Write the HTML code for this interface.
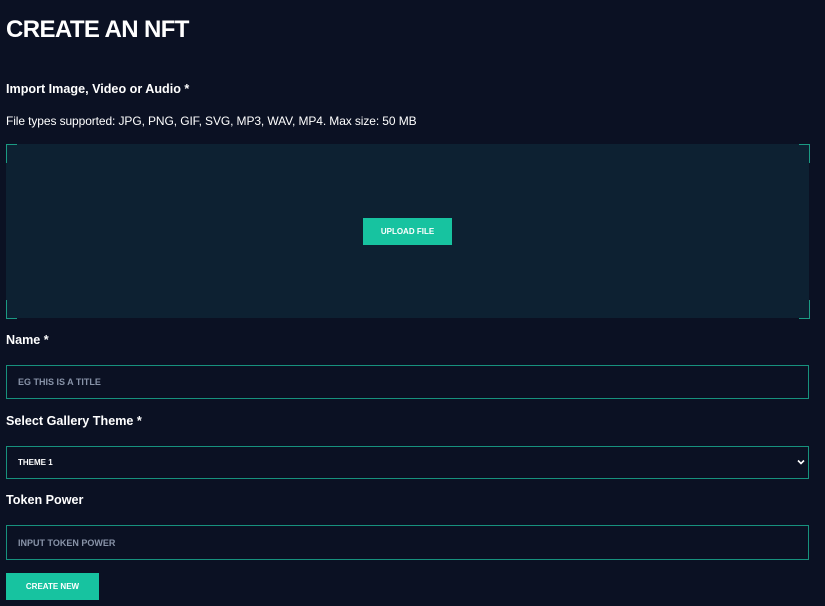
<!DOCTYPE html>
<html><head><style>
body{margin:0;background:#0b1123;font-family:"Liberation Sans",sans-serif;color:#fff;width:825px;height:606px;overflow:hidden;position:relative}
.a{position:absolute}
h1{position:absolute;left:6px;top:16px;margin:0;font-size:24px;font-weight:bold;letter-spacing:-0.6px}
.lbl{position:absolute;left:6px;font-size:12.6px;font-weight:bold}
.box{position:absolute;left:6px;width:801px;border:1px solid #17917d;background:#0b1123}
.ph{position:absolute;left:11px;font-size:9px;color:#8893a8;font-weight:bold}
.btn{position:absolute;background:#17c3a0;color:#fff;font-size:8px;font-weight:bold;text-align:center}
.c{position:absolute;width:10px;height:18px;border-color:#1b9a83;border-style:solid;border-width:0}
</style></head><body>
<h1>CREATE AN NFT</h1>
<div class="lbl" style="top:82px">Import Image, Video or Audio *</div>
<div class="a" style="left:6px;top:114px;font-size:12px;letter-spacing:-0.1px">File types supported: JPG, PNG, GIF, SVG, MP3, WAV, MP4. Max size: 50 MB</div>
<div class="a" style="left:6px;top:144px;width:803px;height:174px;background:#0d2132"></div>
<div class="c" style="left:6px;top:144px;border-top-width:1px;border-left-width:1px"></div>
<div class="c" style="left:799px;top:144px;border-top-width:1px;border-right-width:1px"></div>
<div class="c" style="left:6px;top:300px;border-bottom-width:1px;border-left-width:1px"></div>
<div class="c" style="left:799px;top:300px;border-bottom-width:1px;border-right-width:1px"></div>
<div class="btn" style="left:363px;top:218px;width:89px;height:27px;line-height:27px">UPLOAD FILE</div>
<div class="lbl" style="top:333px">Name *</div>
<div class="box" style="top:365px;height:32px"><div class="ph" style="top:11px">EG THIS IS A TITLE</div></div>
<div class="lbl" style="top:414px">Select Gallery Theme *</div>
<div class="box" style="top:446px;height:31px"><div class="ph" style="top:11px;color:#fff;font-size:8px">THEME 1</div>
<svg class="a" style="right:3px;top:12px" width="8" height="6" viewBox="0 0 8 6"><path d="M1 1.5L4 4.5L7 1.5" stroke="#fff" stroke-width="1.6" fill="none"/></svg></div>
<div class="lbl" style="top:493px">Token Power</div>
<div class="box" style="top:525px;height:33px"><div class="ph" style="top:12px">INPUT TOKEN POWER</div></div>
<div class="btn" style="left:6px;top:573px;width:93px;height:27px;line-height:27px">CREATE NEW</div>
</body></html>
